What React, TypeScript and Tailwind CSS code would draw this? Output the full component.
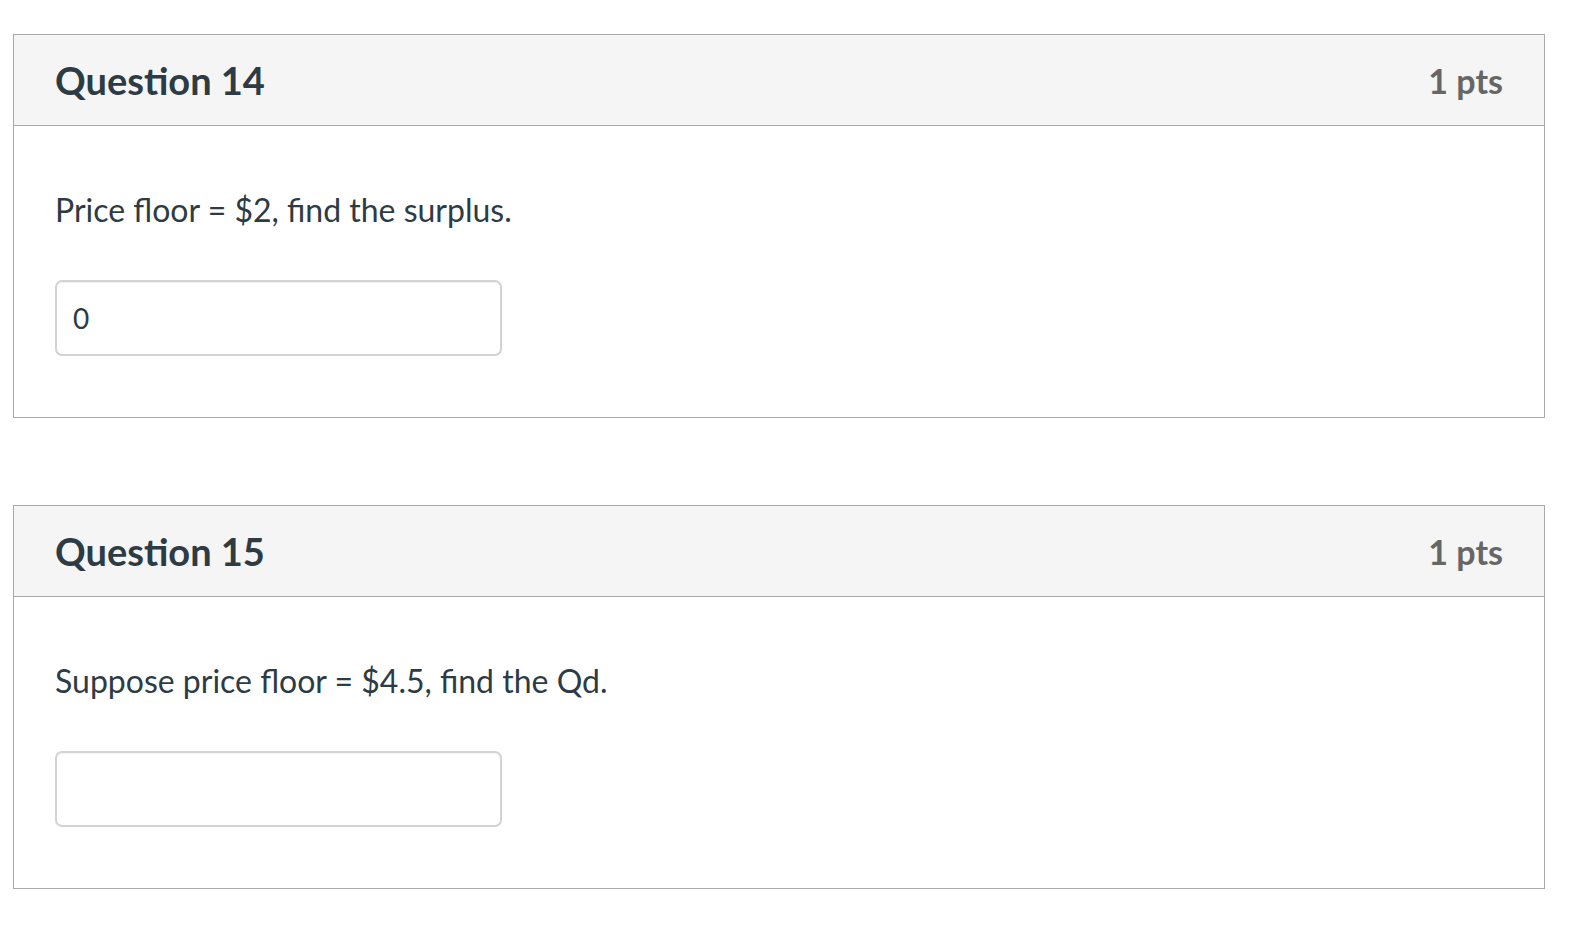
import React from "react";

type Question = { id: number; title: string; prompt: string; answer: string };

const questions: Question[] = [
  { id: 14, title: "Question 14", prompt: "Price floor = $2, find the surplus.", answer: "0" },
  { id: 15, title: "Question 15", prompt: "Suppose price floor = $4.5, find the Qd.", answer: "" },
];

function QuestionCard({ q }: { q: Question }) {
  return (
    <div className="border border-[#a9a9a9] bg-white">
      <div className="flex h-[91px] items-center justify-between border-b border-[#a9a9a9] bg-[#f5f5f5] pl-[41px] pr-[41px]">
        <h2 className="text-[38px] font-bold text-[#2d3b45]">{q.title}</h2>
        <span className="text-[34px] font-bold text-[#666666]">1 pts</span>
      </div>
      <div className="pl-[41px] pt-[61px] pb-[61px]">
        <p className="text-[32px] leading-[45px] text-[#2d3b45]">{q.prompt}</p>
        <input
          type="text"
          defaultValue={q.answer}
          className="mt-[48px] block h-[76px] w-[447px] rounded-[7px] border-2 border-[#d3d3d3] px-[16px] text-[28px] text-[#2d3b45] shadow-[inset_0_1px_1px_rgba(0,0,0,0.06)] outline-none"
        />
      </div>
    </div>
  );
}

export default function App() {
  return (
    <div
      className="min-h-screen bg-white pl-[13px] pr-[30px] pt-[34px]"
      style={{ fontFamily: "Lato, 'Noto Sans', sans-serif" }}
    >
      <div className="flex w-[1532px] flex-col gap-[87px]">
        {questions.map((q) => (
          <QuestionCard key={q.id} q={q} />
        ))}
      </div>
    </div>
  );
}
